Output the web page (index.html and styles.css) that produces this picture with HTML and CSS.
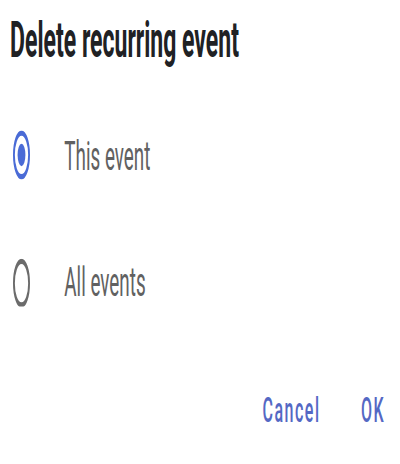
FILE: index.html
```html
<!DOCTYPE html>
<html>
<head>
<meta charset="utf-8">
<link rel="stylesheet" href="styles.css">
</head>
<body>
<div class="dialog">
  <h1 class="title">Delete recurring event</h1>
  <div class="options">
    <div class="option">
      <svg class="radio radio-on" viewBox="0 0 20 20" preserveAspectRatio="none" width="17" height="22.5">
        <circle cx="10" cy="10" r="8.9" fill="none" stroke="#4a6bd6" stroke-width="2.2"/>
        <circle cx="10" cy="10" r="4.6" fill="#4a6bd6"/>
      </svg>
      <span class="label">This event</span>
    </div>
    <div class="option">
      <svg class="radio radio-off" viewBox="0 0 20 20" preserveAspectRatio="none" width="17" height="22.5">
        <circle cx="10" cy="10" r="8.9" fill="none" stroke="#6b6b6b" stroke-width="2.2"/>
      </svg>
      <span class="label">All events</span>
    </div>
  </div>
  <div class="actions">
    <span class="btn">Cancel</span>
    <span class="btn">OK</span>
  </div>
</div>
</body>
</html>
```

FILE: styles.css
```css
html {
  margin: 0;
  padding: 0;
  height: 464px;
  background: #ffffff;
  overflow: hidden;
}

body {
  margin: 0;
  padding: 0;
  height: 464px;
}

.dialog {
  width: 400px;
  height: 213.4px;
  transform: scaleY(2.1739);
  transform-origin: 0 0;
  font-family: Roboto, "Noto Sans", Arial, sans-serif;
  display: flex;
  flex-direction: column;
}

.title {
  margin: 6.9px 0 0 0;
  padding-left: 10.1px;
  font-size: 23px;
  line-height: 23px;
  font-weight: 700;
  color: #202124;
}

.options {
  margin-top: 13.8px;
  display: flex;
  flex-direction: column;
}

.option {
  height: 57.96px;
  display: flex;
  align-items: center;
}

.radio {
  display: block;
  margin-left: 13.3px;
  flex: none;
}

.radio-on {
  margin-bottom: 2.3px;
}

.radio-off {
  margin-bottom: 1.4px;
}

.label {
  margin-left: 34px;
  font-size: 18.86px;
  line-height: 18.86px;
  color: #616161;
}

.actions {
  margin-top: 21.85px;
  display: flex;
  justify-content: flex-end;
  gap: 40.5px;
  padding-right: 14.9px;
}

.btn {
  font-size: 16px;
  line-height: 16px;
  font-weight: 500;
  letter-spacing: 1.5px;
  color: #5468c4;
}
```
